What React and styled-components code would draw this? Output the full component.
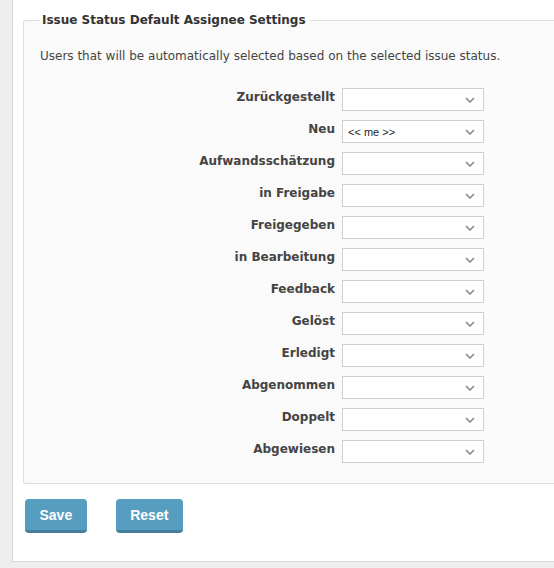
import React from 'react';
import styled, { createGlobalStyle } from 'styled-components';

const statuses = [
  { name: 'Zurückgestellt', value: '' },
  { name: 'Neu', value: '<< me >>' },
  { name: 'Aufwandsschätzung', value: '' },
  { name: 'in Freigabe', value: '' },
  { name: 'Freigegeben', value: '' },
  { name: 'in Bearbeitung', value: '' },
  { name: 'Feedback', value: '' },
  { name: 'Gelöst', value: '' },
  { name: 'Erledigt', value: '' },
  { name: 'Abgenommen', value: '' },
  { name: 'Doppelt', value: '' },
  { name: 'Abgewiesen', value: '' },
];

const Chevron = () => (
  <svg width="10" height="6" viewBox="0 0 10 6">
    <path d="M1 1 L5 5 L9 1" fill="none" stroke="#8a8a8a" strokeWidth="1.6" />
  </svg>
);

const App = () => {
  return (
    <Page>
      <GlobalStyle />
      <Content>
        <Fieldset>
          <Legend>Issue Status Default Assignee Settings</Legend>
          <Description>
            Users that will be automatically selected based on the selected issue status.
          </Description>
          <Rows>
            {statuses.map((status) => (
              <Row key={status.name}>
                <Label>{status.name}</Label>
                <Select>
                  <SelectValue>{status.value}</SelectValue>
                  <Chevron />
                </Select>
              </Row>
            ))}
          </Rows>
        </Fieldset>
        <Buttons>
          <Button>Save</Button>
          <Button>Reset</Button>
        </Buttons>
      </Content>
    </Page>
  );
};

const GlobalStyle = createGlobalStyle`
  html, body {
    margin: 0;
    padding: 0;
    background: #eeeeee;
    overflow: hidden;
  }
  body {
    font-family: "DejaVu Sans", Verdana, sans-serif;
    color: #333;
  }
`;

const Page = styled.div`
  height: 568px;
  display: flex;
  align-items: flex-start;
  padding-left: 12px;
`;

const Content = styled.div`
  flex: 1;
  background: #ffffff;
  border-left: 1px solid #d7d7d7;
  border-bottom: 1px solid #d7d7d7;
  padding: 13px 0 28px 10px;
`;

const Fieldset = styled.fieldset`
  margin: 0;
  min-width: 0;
  padding: 22px 16px 20px 16px;
  border: 1px solid #e0e0e0;
  border-right: none;
  border-radius: 3px 0 0 3px;
  background: #fafafa;
`;

const Legend = styled.legend`
  padding: 0 4px 0 2px;
  margin-left: 0;
  font-size: 12px;
  font-weight: bold;
  color: #333;
`;

const Description = styled.p`
  margin: 0 0 25px 0;
  font-size: 12px;
  color: #444;
`;

const Rows = styled.div`
  display: flex;
  flex-direction: column;
  gap: 9px;
`;

const Row = styled.div`
  display: grid;
  grid-template-columns: 295px 142px;
  column-gap: 7px;
  align-items: start;
`;

const Label = styled.label`
  text-align: right;
  font-size: 12px;
  font-weight: bold;
  color: #444;
  padding-top: 2px;
`;

const Select = styled.div`
  box-sizing: border-box;
  height: 23px;
  display: flex;
  align-items: center;
  justify-content: space-between;
  padding: 0 8px 0 5px;
  background: #ffffff;
  border: 1px solid #cfcfcf;
`;

const SelectValue = styled.span`
  font-family: "Liberation Sans", Arial, sans-serif;
  font-size: 11px;
  color: #222;
`;

const Buttons = styled.div`
  display: flex;
  gap: 29px;
  margin-top: 15px;
  padding-left: 2px;
`;

const Button = styled.button`
  box-sizing: border-box;
  height: 34px;
  padding: 0 14.5px;
  background: #569dbf;
  border: none;
  border-bottom: 3px solid #467f9b;
  border-radius: 4px;
  color: #ffffff;
  font-family: "Liberation Sans", Arial, sans-serif;
  font-size: 14px;
  font-weight: bold;
  cursor: pointer;
`;

export default App;
